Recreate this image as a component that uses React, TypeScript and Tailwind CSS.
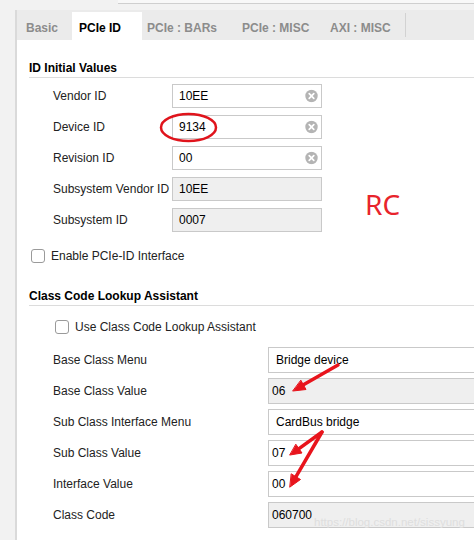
import React from "react";

const font = { fontFamily: '"Liberation Sans", Arial, sans-serif' };

function ClearIcon() {
  return (
    <svg width="13" height="13" viewBox="0 0 13 13" className="absolute right-[3px] top-1/2 -translate-y-1/2">
      <circle cx="6.5" cy="6.5" r="6.2" fill="#b4b4b4" />
      <path d="M4.2 4.2 L8.8 8.8 M8.8 4.2 L4.2 8.8" stroke="#fff" strokeWidth="1.7" strokeLinecap="round" />
    </svg>
  );
}

function Field({ label, value, clear, disabled, labelW, inputW, indent = "pl-[6px]" }: {
  label: string;
  value: string;
  clear?: boolean;
  disabled?: boolean;
  labelW: string;
  inputW: string;
  indent?: string;
}) {
  return (
    <div className="flex items-center">
      <div className={`${labelW} shrink-0 text-[12px] text-[#222]`}>{label}</div>
      <div
        className={`relative ${inputW} shrink-0 h-full flex items-center ${indent} border border-[#c9c9c9] text-[12px] text-black ${
          disabled ? "bg-[#efefef]" : "bg-white"
        }`}
      >
        {value}
        {clear && <ClearIcon />}
      </div>
    </div>
  );
}

function Checkbox({ label }: { label: string }) {
  return (
    <div className="flex items-center gap-[6px] h-[13px]">
      <div className="w-[14px] h-[14px] rounded-[3px] border border-[#9a9a9a] bg-white" />
      <span className="text-[12px] text-[#222]">{label}</span>
    </div>
  );
}

const tabs = [
  { name: "Basic", w: "w-[55px]", pl: "pl-[9px]" },
  { name: "PCIe ID", w: "w-[70px]", pl: "pl-[7px]", active: true },
  { name: "PCIe : BARs", w: "w-[93px]", pl: "pl-[5px]" },
  { name: "PCIe : MISC", w: "w-[90px]", pl: "pl-[7px]" },
  { name: "AXI : MISC", w: "w-[81px]", pl: "pl-[5px]" },
];

export default function App() {
  return (
    <div className="relative w-[474px] h-[540px] overflow-hidden bg-[#f2f2f2]" style={font}>
      {/* strip above tabs */}
      <div className="h-[10px]">
        <div className="ml-[118px] h-[4px] bg-[#f8f8f8] border-b border-[#cfcfcf]" />
      </div>

      <div className="ml-[15px] border-l-2 border-[#dadada] h-[530px] flex flex-col">
        {/* tab bar */}
        <div className="h-[30px] bg-[#ebebeb] flex items-end shrink-0">
          {tabs.map((t) => (
            <div
              key={t.name}
              className={`${t.w} ${t.pl} flex items-center pt-[3px] text-[12px] font-bold ${
                t.active ? "h-[28px] bg-white text-black" : "h-[28px] text-[#8c8c8c]"
              }`}
            >
              {t.name}
            </div>
          ))}
          <div className="self-center h-[24px] w-px bg-[#d2d2d2] -ml-px" />
        </div>

        {/* content */}
        <div className="flex-1 bg-white pl-[12px]">
          <div className="pt-[20px] leading-[16px] pb-[1px] border-b border-[#dcdcdc] text-[12px] font-bold text-black">
            ID Initial Values
          </div>

          <div className="pl-[24px] mt-[6px] flex flex-col gap-[7px] [&>div]:h-[24px]">
            <Field label="Vendor ID" value="10EE" clear labelW="w-[119px]" inputW="w-[150px]" />
            <Field label="Device ID" value="9134" clear labelW="w-[119px]" inputW="w-[150px]" />
            <Field label="Revision ID" value="00" clear labelW="w-[119px]" inputW="w-[150px]" />
            <Field label="Subsystem Vendor ID" value="10EE" disabled labelW="w-[119px]" inputW="w-[150px]" />
            <Field label="Subsystem ID" value="0007" disabled labelW="w-[119px]" inputW="w-[150px]" />
          </div>

          <div className="mt-[17px] pl-[2px]">
            <Checkbox label="Enable PCIe-ID Interface" />
          </div>

          <div className="mt-[26px] leading-[16px] pb-[1px] border-b border-[#dcdcdc] text-[12px] font-bold text-black">
            Class Code Lookup Assistant
          </div>

          <div className="mt-[14px] pl-[26px]">
            <Checkbox label="Use Class Code Lookup Assistant" />
          </div>

          <div className="pl-[24px] mt-[14px] flex flex-col gap-[5px] [&>div]:h-[26px]">
            <Field label="Base Class Menu" value="Bridge device" labelW="w-[215px]" inputW="w-[240px]" indent="pl-[7px]" />
            <Field label="Base Class Value" value="06" disabled labelW="w-[215px]" inputW="w-[240px]" indent="pl-[3px]" />
            <Field label="Sub Class Interface Menu" value="CardBus bridge" labelW="w-[215px]" inputW="w-[240px]" indent="pl-[7px]" />
            <Field label="Sub Class Value" value="07" labelW="w-[215px]" inputW="w-[240px]" indent="pl-[3px]" />
            <Field label="Interface Value" value="00" labelW="w-[215px]" inputW="w-[240px]" indent="pl-[3px]" />
            <Field label="Class Code" value="060700" disabled labelW="w-[215px]" inputW="w-[240px]" indent="pl-[3px]" />
          </div>
        </div>
      </div>

      {/* annotations */}
      <div
        className="absolute left-[365px] top-[184px] text-[28px] leading-[40px] text-[#e8242c]"
        style={{ fontFamily: '"Noto Sans", sans-serif' }}
      >
        RC
      </div>
      <div className="absolute left-[314px] top-[515px] text-[11.5px] leading-[14px] text-[#dedede]">
        https://blog.csdn.net/sissyung
      </div>
      <svg className="absolute inset-0 pointer-events-none" width="474" height="540">
        <ellipse cx="188.5" cy="127.5" rx="27.5" ry="13.5" fill="none" stroke="#e0141c" strokeWidth="2.5" />
        <g fill="#e8141c" stroke="#e8141c" strokeLinecap="round">
          <line x1="338" y1="365" x2="303" y2="385" strokeWidth="3.5" />
          <polygon points="293,391 306,389.5 301,380.5" strokeWidth="1" />
          <line x1="322" y1="432" x2="299" y2="448.6" strokeWidth="3.5" />
          <polygon points="290,455 302,453 296,444.5" strokeWidth="1" />
          <line x1="322" y1="432" x2="296" y2="476.6" strokeWidth="3.5" />
          <polygon points="290,487 300.5,479.5 291.5,474" strokeWidth="1" />
        </g>
      </svg>
    </div>
  );
}
